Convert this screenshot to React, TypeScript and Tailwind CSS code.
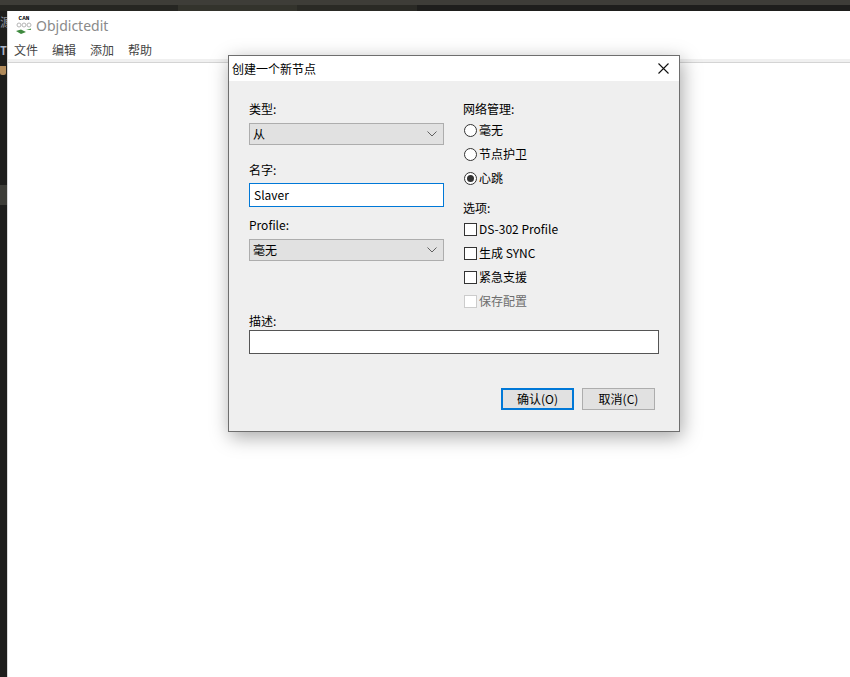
const cjk = 'font-["Noto_Sans_CJK_SC","Noto_Sans",sans-serif]';

function Chevron() {
  return (
    <svg width="10" height="6" viewBox="0 0 10 6" fill="none" stroke="#606060" strokeWidth="1">
      <path d="M0.5 0.5 L5 5 L9.5 0.5" />
    </svg>
  );
}

function Select({ value }: { value: string }) {
  return (
    <div className="mt-[6px] flex h-[22px] items-center justify-between border border-[#adadad] bg-[#e1e1e1] pl-[3px] pr-[6px]">
      <span className="text-[12px] leading-[16px] text-black">{value}</span>
      <Chevron />
    </div>
  );
}

function Radio({ label, checked }: { label: string; checked?: boolean }) {
  return (
    <div className="flex h-[24px] items-center gap-[2px] pl-[1px]">
      <span className="flex h-[13px] w-[13px] items-center justify-center rounded-full border border-[#333333] bg-white">
        {checked && <span className="h-[7px] w-[7px] rounded-full bg-[#333333]" />}
      </span>
      <span className="text-[12px] leading-[16px] text-black">{label}</span>
    </div>
  );
}

function Check({ label, disabled }: { label: string; disabled?: boolean }) {
  return (
    <div className="flex h-[24px] items-center gap-[2px] pl-[1px]">
      <span className={disabled ? "h-[13px] w-[13px] border border-[#cccccc] bg-white" : "h-[13px] w-[13px] border border-[#333333] bg-white"} />
      <span className={disabled ? "text-[12px] leading-[16px] text-[#6d6d6d]" : "text-[12px] leading-[16px] text-black"}>{label}</span>
    </div>
  );
}

function Logo() {
  return (
    <div className="flex h-[22px] w-[18px] flex-col items-center">
      <span className='font-["Liberation_Mono",monospace] text-[6px] font-bold leading-[7px] text-black'>CAN</span>
      <svg width="18" height="14" viewBox="0 0 18 14" fill="none">
        <circle cx="4" cy="3" r="2" stroke="#b5b5b5" strokeWidth="1" />
        <circle cx="9" cy="3" r="2" stroke="#b5b5b5" strokeWidth="1" />
        <circle cx="14" cy="3" r="2" stroke="#b5b5b5" strokeWidth="1" />
        <path d="M1 9 L6 7.5 L11 10 L6 12 Z" fill="#3f8a3f" />
        <path d="M11 8 L16 6.5 L16 8 Z" fill="#5aa05a" />
      </svg>
    </div>
  );
}

export default function App() {
  return (
    <div className={`relative flex h-[677px] w-[850px] flex-col overflow-hidden bg-white ${cjk}`}>
      {/* dark editor behind the window */}
      <div className="h-[5px] shrink-0 bg-[#3e3d38]" />
      <div className="flex h-[6px] shrink-0 bg-[#1e1e1c]">
        <div className="w-[178px] bg-[#262622]" />
        <div className="w-[119px] bg-[#33332c]" />
        <div className="w-[120px] bg-[#2a2a25]" />
        <div className="flex-1" />
      </div>

      <div className="flex flex-1">
        <div className="flex w-[7px] shrink-0 flex-col items-start overflow-hidden bg-[#1e1e1c]">
          <span className="mt-[3px] w-[7px] overflow-hidden whitespace-nowrap text-[12px] leading-[16px] text-[#8a8f99]">源</span>
          <span className="mt-[13px] text-[11px] font-bold leading-[14px] text-[#a9b4c4]">T</span>
          <span className="mt-[9px] h-[9px] w-[6px] rounded-b-[2px] bg-[#b08a5a]" />
          <span className="mt-[68px] h-[20px] w-[7px] bg-transparent" />
          <span className="mt-[22px] h-[20px] w-[7px] bg-[#3d3d38]" />
        </div>

        <div className="flex flex-1 flex-col border-l border-[#d9d9d9] bg-white">
          <div className="flex h-[29px] items-center gap-[3px] pl-[7px]">
            <Logo />
            <span className='font-["Noto_Sans",sans-serif] text-[14px] leading-[18px] text-[#8a8a8a]'>Objdictedit</span>
          </div>
          <div className="flex h-[19px] items-center gap-[14px] pl-[6px] text-[12px] leading-[16px] text-[#444444]">
            <span>文件</span>
            <span>编辑</span>
            <span>添加</span>
            <span>帮助</span>
          </div>
          <div className="h-[4px] border-b border-[#d4d4d4] bg-[#f0f0f0]" />
        </div>
      </div>

      {/* dialog */}
      <div className="absolute left-[228px] top-[55px] w-[452px] border border-[#6e6e6e] bg-[#efefef] shadow-[2px_5px_18px_rgba(0,0,0,0.35)]">
        <div className="flex h-[25px] items-center justify-between bg-white pl-[3px] pr-[10px]">
          <span className="text-[12px] leading-[16px] text-black">创建一个新节点</span>
          <svg width="11" height="11" viewBox="0 0 11 11" stroke="#111111" strokeWidth="1.1">
            <path d="M0.5 0.5 L10.5 10.5 M10.5 0.5 L0.5 10.5" />
          </svg>
        </div>

        <div className="px-[20px] pb-[21px] pt-[20px]">
          <div className="flex gap-[19px]">
            <div className="w-[195px]">
              <div className="text-[12px] leading-[16px] text-black">类型:</div>
              <Select value="从" />
              <div className="mt-[17px] text-[12px] leading-[16px] text-black">名字:</div>
              <div className="mt-[5px] flex h-[24px] items-center border border-[#0078d7] bg-white pl-[4px] text-[12px] leading-[16px] text-black">
                Slaver
              </div>
              <div className="mt-[10px] text-[12px] leading-[16px] text-black">Profile:</div>
              <Select value="毫无" />
            </div>

            <div className="flex-1">
              <div className="mb-[1px] text-[12px] leading-[16px] text-black">网络管理:</div>
              <Radio label="毫无" />
              <Radio label="节点护卫" />
              <Radio label="心跳" checked />
              <div className="mb-[1px] mt-[10px] text-[12px] leading-[16px] text-black">选项:</div>
              <Check label="DS-302 Profile" />
              <Check label="生成 SYNC" />
              <Check label="紧急支援" />
              <Check label="保存配置" disabled />
            </div>
          </div>

          <div className="text-[12px] leading-[16px] text-black">描述:</div>
          <div className="mt-[1px] h-[24px] border border-[#555555] bg-white" />

          <div className="mt-[34px] flex justify-end gap-[8px] pr-[4px]">
            <button className="flex h-[22px] w-[73px] items-center justify-center border-2 border-[#0078d7] bg-[#e1e1e1] text-[12px] leading-[16px] text-black">
              确认(O)
            </button>
            <button className="flex h-[22px] w-[73px] items-center justify-center border border-[#adadad] bg-[#e1e1e1] text-[12px] leading-[16px] text-black">
              取消(C)
            </button>
          </div>
        </div>
      </div>
    </div>
  );
}
